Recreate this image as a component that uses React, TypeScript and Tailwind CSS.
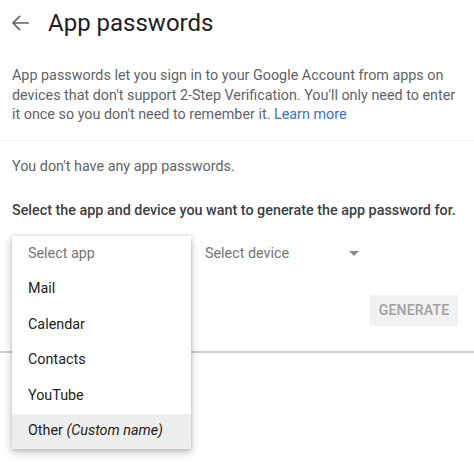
import React from "react";

const font = { fontFamily: "Roboto, 'Liberation Sans', Arial, sans-serif" };

function BackArrow() {
  return (
    <svg width="24" height="24" viewBox="0 0 24 24" fill="none">
      <path d="M20 12H5.5M11.5 5.5L5 12l6.5 6.5" stroke="#5f6368" strokeWidth="1.6" strokeLinecap="square" />
    </svg>
  );
}

const items = ["Mail", "Calendar", "Contacts", "YouTube"];

export default function App() {
  return (
    <div className="relative w-[474px] h-[474px] bg-white overflow-hidden" style={font}>
      <div className="border-b-2 border-[#cfcfcf]">
        <div className="h-[45px] flex items-center pl-2">
          <BackArrow />
          <span className="ml-4 text-[24px] text-[#202124] leading-none">App passwords</span>
        </div>
        <p className="mt-[21px] px-3 text-[14.35px] leading-[19.5px] text-[#5f6368] h-[74px]">
          App passwords let you sign in to your Google Account from apps on devices that don't support 2-Step Verification. You'll only need to enter it once so you don't need to remember it.{" "}
          <span className="text-[#3d6fc4]">Learn more</span>
        </p>
        <div className="border-t border-[#f0f0f0] pt-[16px] px-3">
          <p className="text-[14.35px] leading-[20px] text-[#5f6368]">You don't have any app passwords.</p>
          <p className="mt-[24px] text-[14.35px] leading-[20px] text-[#3c4043] font-medium">
            Select the app and device you want to generate the app password for.
          </p>
          <div className="mt-[15px] flex items-start">
            <div className="w-[179px] h-[35px] flex items-center px-4 text-[14px] text-[#757575]">Select app</div>
            <div className="ml-[14px] w-[160px] h-[35px] flex items-center justify-between text-[14.35px] text-[#757575]">
              <span>Select device</span>
              <svg width="10" height="5" viewBox="0 0 10 5" className="mr-[6px]">
                <path d="M0 0h10L5 5z" fill="#8a8a8a" />
              </svg>
            </div>
          </div>
          <div className="mt-[24px] flex justify-end pr-1 pb-[25px]">
            <div className="w-[88px] h-[31px] bg-[#f1f1f1] flex items-center justify-center text-[14px] font-medium text-[#a0a0a0] tracking-[0.2px]">
              GENERATE
            </div>
          </div>
        </div>
      </div>

      <div className="absolute left-[12px] top-[236px] w-[179px] bg-white shadow-[0_3px_8px_rgba(0,0,0,0.28),0_0_3px_rgba(0,0,0,0.12)]">
        <div className="h-[35.5px] flex items-center px-4 text-[14.35px] text-[#757575]">Select app</div>
        {items.map((t) => (
          <div key={t} className="h-[35.5px] flex items-center px-4 text-[14.35px] text-[#212121]">
            {t}
          </div>
        ))}
        <div className="h-[35.5px] flex items-center px-4 text-[14.35px] text-[#212121] bg-[#eeeeee]">
          Other&nbsp;<span className="italic">(Custom name)</span>
        </div>
      </div>
    </div>
  );
}
